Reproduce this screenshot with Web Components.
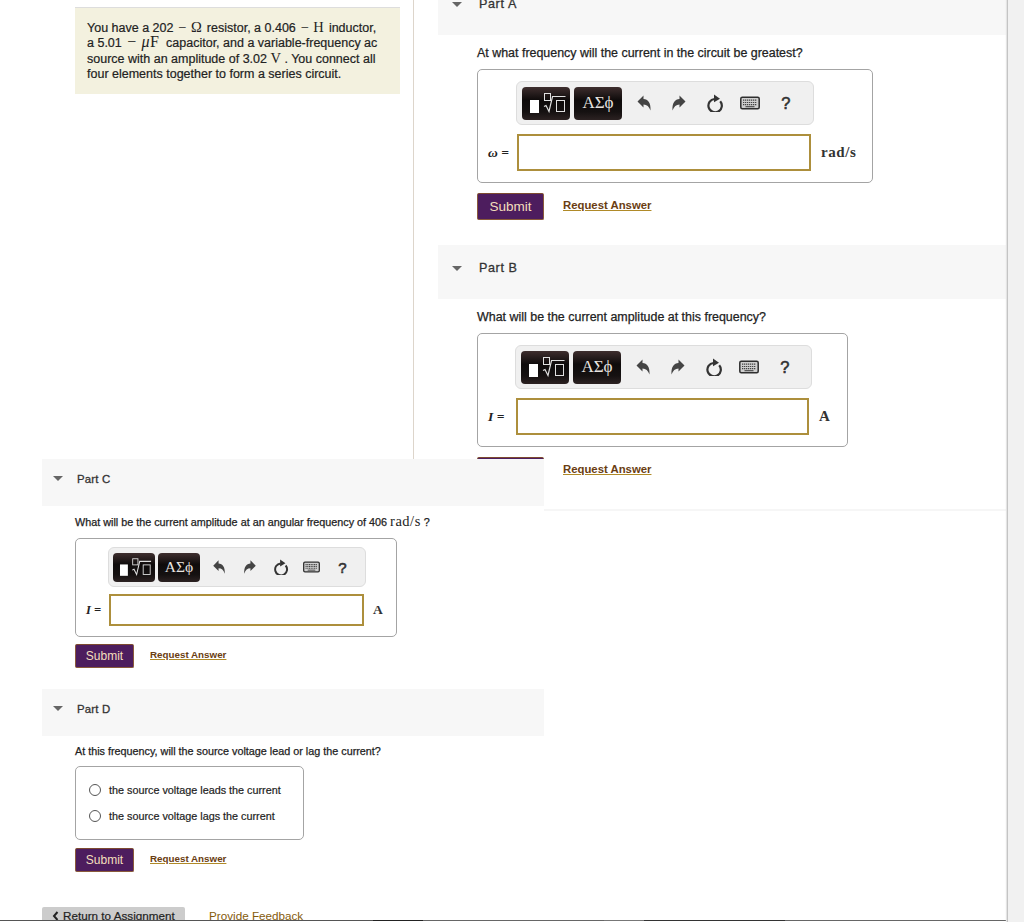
<!DOCTYPE html>
<html lang="en">
<head>
<meta charset="utf-8">
<title>Part C</title>
<style>
html, body { margin: 0; height: 100%; background: #fff; overflow: hidden; }
body { font-family: "Liberation Sans", Arial, sans-serif; color: #222; }
.m { font-family: "Liberation Serif", serif; }
.mi { font-family: "Liberation Serif", serif; font-style: italic; font-weight: 700; }
hw-statement .m { font-size: 14.5px; line-height: 0; -webkit-text-stroke: 0; }
hw-statement .op { margin: 0 1.2px; letter-spacing: .5px; }
hw-statement .uf { margin: 0 3px 0 2px; font-size: 16px; letter-spacing: .6px; }
hw-part.big { --title: 12.6px; --track: .6px; --tri-x: 14px; --title-x: 17px; --head-h: 54px; --body-x: 39px; }
hw-part.small { --title: 11.4px; --track: .2px; --tri-x: 11px; --title-x: 14px; --head-h: 47px; --body-x: 33px; }
</style>
</head>
<body>
<hw-page>
  <hw-statement slot="left">
    You have a 202 <span class="m op">−&nbsp;Ω</span> resistor, a 0.406 <span class="m op">−&nbsp;H</span> inductor,<br>
    a 5.01 <span class="m uf">−&nbsp;<i>μ</i>F</span> capacitor, and a variable-frequency ac<br>
    source with an amplitude of 3.02 <span class="m">V</span> . You connect all<br>
    four elements together to form a series circuit.
  </hw-statement>

  <div slot="right">
    <hw-part class="big" title-text="Part A">
      <hw-question style="--h:34px;--size:12.45px;--nudge:2px">At what frequency will the current in the circuit be greatest?</hw-question>
      <hw-answer style="--box:396px;--field:294px;--lab:39px;--tm:-1px;--tool:298px"><span slot="label" class="mi">ω =</span><span slot="unit" class="m">rad/s</span></hw-answer>
      <hw-actions style="--after:25px"></hw-actions>
    </hw-part>
    <hw-part class="big" title-text="Part B" style="border-bottom:2px solid #f6f6f6">
      <hw-question style="--h:34px;--size:12.45px;--nudge:2px">What will be the current amplitude at this frequency?</hw-question>
      <hw-answer style="--box:371px;--field:293px;--lab:38px;--tm:-1px;--tool:297px"><span slot="label" class="mi">I =</span><span slot="unit" class="m">A</span></hw-answer>
      <hw-actions style="--after:25px"></hw-actions>
    </hw-part>
  </div>

  <hw-part slot="lower" class="small" title-text="Part C">
    <hw-question style="--h:32px;--size:10.8px">What will be the current amplitude at an angular frequency of 406 <span class="m" style="font-size:14.5px;letter-spacing:.5px;line-height:0;-webkit-text-stroke:0">rad/s</span> ?</hw-question>
    <hw-answer small style="--box:322px;--field:255px;--lab:33px;--tm:-1px;--tool:258px"><span slot="label" class="mi">I =</span><span slot="unit" class="m">A</span></hw-answer>
    <hw-actions small style="--before:7px;--after:21px"></hw-actions>
  </hw-part>
  <hw-part slot="lower" class="small" title-text="Part D">
    <hw-question style="--h:30px;--size:10.8px">At this frequency, will the source voltage lead or lag the current?</hw-question>
    <hw-choices>
      <hw-radio>the source voltage leads the current</hw-radio>
      <hw-radio>the source voltage lags the current</hw-radio>
    </hw-choices>
    <hw-actions small style="--before:8px;--after:35px"></hw-actions>
  </hw-part>
  <hw-footer slot="lower"></hw-footer>
</hw-page>

<script>
function define(name, css, markup, setup) {
    customElements.define(name, class extends HTMLElement {
        constructor() {
            super()
            const shadow = this.attachShadow({ mode: 'open' })
            const template = document.createElement('template')
            template.innerHTML = `<style>${css}</style>${markup}`
            shadow.append(template.content.cloneNode(true))
        }
        connectedCallback() {
            if (setup) setup(this)
        }
    })
}

define('hw-page', `
    :host { display: flex; width: 1024px; height: 922px; overflow: hidden; }
    .main { width: 1007px; display: grid; grid-template-rows: 459px 461px 2px; }
    .top { display: flex; min-height: 0; }
    .left { width: 338px; height: 452px; padding: 7px 0 0 75px; border-right: 1px solid #ddd5cb; }
    .right { width: 569px; margin-left: 24px; margin-top: -19px; }
    .lower { position: relative; z-index: 1; margin-left: 42px; width: 502px; background: #fff; overflow: hidden; }
    .edge {
        background: linear-gradient(90deg, #555 0 37%, #222 37% 42%, #666 42% 60%, #777 60% 64%, #333 64% 78%, #666 78% 100%);
        height: 1px;
    }
    .scroll { width: 16px; background: #f1f1f1; border-left: 1px solid #c4c4c4; box-shadow: -1px 0 1px #e4e4e4; }
`, `
    <div class="main">
        <div class="top">
            <div class="left"><slot name="left"></slot></div>
            <div class="right"><slot name="right"></slot></div>
        </div>
        <div class="lower"><slot name="lower"></slot></div>
        <div class="edge"></div>
    </div>
    <div class="scroll"></div>
`)

define('hw-statement', `
    :host {
        display: block; width: 325px; height: 87px; box-sizing: border-box; padding: 13px 0 0 12px;
        background: #f3f1df; border-top: 1px solid #ddd; white-space: nowrap;
        font-size: 12.5px; line-height: 15.4px; color: #222; -webkit-text-stroke: .2px #222;
    }
`, `<slot></slot>`)

define('hw-part', `
    :host { display: block; }
    .head {
        height: var(--head-h); box-sizing: border-box; padding: 0 0 8px var(--tri-x); background: #f7f7f7;
        display: flex; align-items: center;
        font-size: var(--title); letter-spacing: var(--track); color: #333; -webkit-text-stroke: .3px #333;
    }
    .tri {
        width: 0; height: 0; margin-right: var(--title-x);
        border-left: 5px solid transparent; border-right: 5px solid transparent; border-top: 5px solid #666;
    }
    .body { padding-left: var(--body-x); }
`, `
    <div class="head"><span class="tri"></span><span class="title"></span></div>
    <div class="body"><slot></slot></div>
`, el => {
    el.shadowRoot.querySelector('.title').textContent = el.getAttribute('title-text')
})

define('hw-question', `
    :host {
        display: flex; align-items: center; height: var(--h); box-sizing: border-box; padding-top: var(--nudge, 0);
        font-size: var(--size); color: #222; -webkit-text-stroke: .25px #222; white-space: nowrap;
    }
`, `<div><slot></slot></div>`)

define('hw-toolbar', `
    :host {
        --bw: 48px; --bh: 33px; --step: 35.5px; --gap: 4px; --pad: 5px; --ah: 44px; --sym: 17px; --ic: 18px; --kb: 20px; --qs: 16.5px;
        display: flex; align-items: center; box-sizing: border-box; height: var(--ah); width: var(--tool, 298px);
        padding-left: var(--pad); background: #f0f0f0; border: 1px solid #ddd; border-radius: 6px;
    }
    :host([small]) { --bw: 42px; --bh: 29px; --step: 31px; --gap: 3px; --pad: 4px; --ah: 40px; --sym: 15.5px; --ic: 16px; --kb: 17px; --qs: 15px; }
    .btn {
        width: var(--bw); height: var(--bh); margin-right: var(--gap); border-radius: 4px; flex: none;
        background: linear-gradient(#3e2e2e, #0e0b0b 40%, #151111 75%, #2c2222);
        display: flex; align-items: center; justify-content: center; color: #e8e4e0;
        font-family: "Liberation Serif", serif; font-size: var(--sym);
    }
    .btn svg { width: 100%; height: 100%; display: block; }
    .tool { width: var(--step); flex: none; display: flex; justify-content: center; align-items: center; }
    .tool svg { width: var(--ic); height: var(--ic); display: block; flex: none; }
    .tool svg.kb { width: var(--kb); }
    .q { font-size: var(--qs); color: #333; -webkit-text-stroke: .6px #333; }
`, `
    <span class="btn"><svg viewBox="0 0 48 33">
        <rect x="8" y="13" width="9" height="13" fill="#fff"/>
        <rect x="22.500" y="6.500" width="6" height="7" fill="none" stroke="#e0e0e0"/>
        <path d="M22 19.500l2-1 3 6 3.500-15h13" fill="none" stroke="#e0e0e0" stroke-width="1.200"/>
        <rect x="34.500" y="13.500" width="8" height="11" fill="none" stroke="#e0e0e0"/>
    </svg></span>
    <span class="btn">ΑΣϕ</span>
    <span class="tool"><svg viewBox="0 0 18 18"><path d="M2.500 7.500L8.500 1.500V5C13 5.200 16 9 15.500 16.500 14 12.500 12 10.500 8.500 10.500V13.500z" fill="#444"/></svg></span>
    <span class="tool"><svg viewBox="0 0 18 18"><path transform="matrix(-1 0 0 1 18 0)" d="M2.500 7.500L8.500 1.500V5C13 5.200 16 9 15.500 16.500 14 12.500 12 10.500 8.500 10.500V13.500z" fill="#444"/></svg></span>
    <span class="tool"><svg viewBox="0 0 18 18"><path d="M8.500 5a6.700 6.700 0 1 0 5.700 2.300" fill="none" stroke="#333" stroke-width="2.200"/><path d="M8 .5l6 4.300-6 3.500z" fill="#333"/></svg></span>
    <span class="tool"><svg class="kb" viewBox="0 0 20 14"><rect x=".8" y="1.300" width="18.400" height="11.400" rx="1.500" fill="#cfcfcf" stroke="#2e2e2e" stroke-width="1.500"/><path d="M3 4.200h14M3 6.500h14M3 8.600h14" stroke="#444" stroke-width="1.200" stroke-dasharray="1.300 .7"/><path d="M5.500 10.700h9" stroke="#444" stroke-width="1.100"/></svg></span>
    <span class="tool q">?</span>
`)

define('hw-answer', `
    :host {
        --rowgap: 9px; --pt: 11px; --pb: 11px; --field-h: 37px; --lab-x: 10px; --fs: 13.5px; --unit-x: 10px; --unit: 15px;
        display: grid; box-sizing: border-box; width: var(--box);
        grid-template-columns: var(--lab) var(--field) auto; row-gap: var(--rowgap);
        padding: var(--pt) 0 var(--pb) 0; border: 1px solid #a4a4a4; border-radius: 5px; background: #fff;
    }
    :host([small]) { --rowgap: 7px; --pt: 8px; --pb: 10px; --field-h: 32px; --fs: 12.5px; --unit-x: 9px; --unit: 13.5px; }
    .tool { grid-column: 2 / 4; margin-left: var(--tm, 0); }
    .lab { display: flex; align-items: center; padding-left: var(--lab-x); font-size: var(--fs); color: #222; white-space: nowrap; }
    .field { height: var(--field-h); box-sizing: border-box; border: 2px solid #ad8f3c; background: #fff; }
    .unit { display: flex; align-items: center; padding-left: var(--unit-x); font-size: var(--unit); letter-spacing: .6px; font-weight: 700; color: #333; }
`, `
    <hw-toolbar class="tool"></hw-toolbar>
    <div class="lab"><slot name="label"></slot></div>
    <div class="field"></div>
    <div class="unit"><slot name="unit"></slot></div>
`, el => {
    if (el.hasAttribute('small')) el.shadowRoot.querySelector('hw-toolbar').setAttribute('small', '')
})

define('hw-actions', `
    :host {
        --bw: 67px; --bh: 27px; --fs: 13.500px; --link: 11.350px; --gap: 19px;
        display: flex; margin-top: var(--before, 10px); margin-bottom: var(--after, 0);
    }
    :host([small]) { --bw: 59px; --bh: 24px; --fs: 12px; --link: 9.800px; --gap: 16px; }
    .submit {
        width: var(--bw); height: var(--bh); box-sizing: border-box; display: flex; align-items: center; justify-content: center;
        background: #4d1d5e; border: 1px solid #8a5a3a; border-top-color: #7d4a30; border-radius: 2px; color: #f3dfbc; font-size: var(--fs);
    }
    a {
        margin-left: var(--gap); margin-bottom: 4px; align-self: center; font-size: var(--link); font-weight: 700;
        color: #6a3d12; text-decoration: underline; text-decoration-color: #b08a28;
    }
`, `<div class="submit">Submit</div><a>Request Answer</a>`)

define('hw-choices', `
    :host {
        display: block; box-sizing: border-box; width: 229px; height: 74px; padding: 10px 0 0 13px;
        border: 1px solid #a4a4a4; border-radius: 5px;
    }
`, `<slot></slot>`)

define('hw-radio', `
    :host { display: flex; align-items: center; height: 26px; font-size: 10.8px; color: #222; -webkit-text-stroke: .2px #222; white-space: nowrap; }
    i { width: 12px; height: 12px; box-sizing: border-box; border: 1.5px solid #555; border-radius: 50%; background: #fff; margin-right: 8px; flex: none; }
`, `<i></i><slot></slot>`)

define('hw-footer', `
    :host { display: flex; height: 15px; align-items: flex-start; font-size: 11.7px; }
    .back { width: 143px; height: 20px; box-sizing: border-box; padding: 2px 0 0 10px; background: #ccc; border-radius: 2px 2px 0 0; color: #222; -webkit-text-stroke: .2px #222; white-space: nowrap; }
    .back svg { width: 7px; height: 10px; margin-right: 4px; vertical-align: -1px; }
    a { margin-left: 24px; padding-top: 2px; color: #855c0c; }
`, `
    <div class="back"><svg viewBox="0 0 7 10"><path d="M5.500 1L2 5l3.500 4" fill="none" stroke="#222" stroke-width="2"/></svg>Return to Assignment</div>
    <a>Provide Feedback</a>
`)
</script>
</body>
</html>
